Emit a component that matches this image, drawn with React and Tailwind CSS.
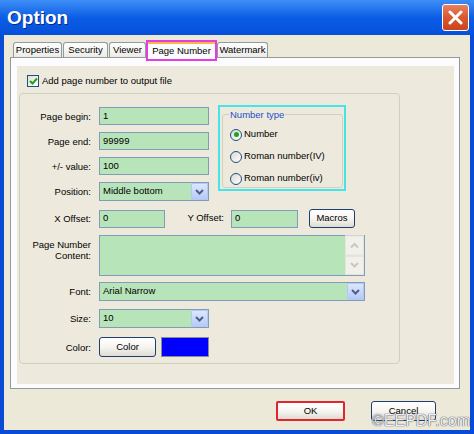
import React from "react";

function Chevron({ color = "#4D6185" }) {
  return (
    <svg width="9" height="6" viewBox="0 0 9 6">
      <path d="M1 1 L4.5 4.5 L8 1" stroke={color} strokeWidth="2" fill="none" />
    </svg>
  );
}

function ComboBtn() {
  return (
    <div className="w-[17px] h-full border border-[#B5C8F4] rounded-[2px] bg-linear-to-b from-[#DCE6FE] to-[#B6C9F8] flex items-center justify-center">
      <Chevron />
    </div>
  );
}

function Label({ children }) {
  return <div className="w-[71px] text-right leading-[11px]">{children}</div>;
}

function XPButton({ children, className = "" }) {
  return (
    <div
      className={
        "border border-[#1E3F6E] rounded-[3px] bg-linear-to-b from-white via-[#F6F5F1] to-[#DEDCD2] flex items-center justify-center " +
        className
      }
    >
      {children}
    </div>
  );
}

function Radio({ checked, label }) {
  return (
    <div className="flex items-center h-[13px]">
      <div className="w-[12px] h-[12px] rounded-full border border-[#1C5180] bg-linear-to-br from-[#DCD9CF] to-white flex items-center justify-center">
        {checked && <div className="w-[5px] h-[5px] rounded-full bg-[#21A121]" />}
      </div>
      <span className="ml-[2px]">{label}</span>
    </div>
  );
}

export default function App() {
  return (
    <div className="w-[474px] h-[434px] bg-[#0A4BD6] flex flex-col font-['Liberation_Sans',Arial,sans-serif] text-[9.5px] text-black overflow-hidden relative">
      {/* Title bar */}
      <div className="h-[35px] shrink-0 bg-linear-to-b from-[#3D8EF6] via-[#0B5DE6] to-[#0650DA] flex items-center justify-between pl-[7px] pr-[5px]">
        <span className="text-white font-bold text-[19px] leading-none [text-shadow:1px_1px_0_#0A2A8A]">
          Option
        </span>
        <div className="w-[27px] h-[27px] rounded-[3px] border border-white bg-linear-to-b from-[#E8805E] via-[#D9582F] to-[#C9441E] flex items-center justify-center">
          <svg width="15" height="15" viewBox="0 0 15 15">
            <path d="M2 2 L13 13 M13 2 L2 13" stroke="white" strokeWidth="3" strokeLinecap="round" />
          </svg>
        </div>
      </div>

      {/* Client area */}
      <div className="flex-1 mx-[4px] mb-[4px] bg-[#ECE9D8] flex flex-col pt-[5px]">
        {/* Tabs */}
        <div className="h-[17px] flex items-start ml-[6px] pl-[3px]">
          <div className="mt-[2px] h-[15px] w-[49px] border border-b-0 border-[#919B9C] rounded-t-[3px] bg-linear-to-b from-white to-[#ECEBE6] flex items-center justify-center">
            Properties
          </div>
          <div className="ml-[1px] mt-[2px] h-[15px] w-[45px] border border-b-0 border-[#919B9C] rounded-t-[3px] bg-linear-to-b from-white to-[#ECEBE6] flex items-center justify-center">
            Security
          </div>
          <div className="ml-[1px] mt-[2px] h-[15px] w-[37px] border border-b-0 border-[#919B9C] rounded-t-[3px] bg-linear-to-b from-white to-[#ECEBE6] flex items-center justify-center">
            Viewer
          </div>
          <div className="relative z-10 h-[21px] w-[71px] border-2 border-[#E33DE3] bg-[#FCFCFE] flex flex-col">
            <div className="h-[2px] bg-[#F7B94A]" />
            <div className="text-center leading-[11px] mt-[1px]">Page Number</div>
          </div>
          <div className="mt-[2px] h-[15px] w-[51px] border border-b-0 border-[#919B9C] rounded-t-[3px] bg-linear-to-b from-white to-[#ECEBE6] flex items-center justify-center">
            Watermark
          </div>
        </div>

        {/* Tab panel */}
        <div className="ml-[6px] w-[450px] h-[332px] border border-[#919B9C] bg-[#FCFCFE] pt-[8px] pl-[6px] pr-[5px] pb-[4px]">
          <div className="h-full bg-[#EDEADD] flex flex-col pl-[2px]">
            {/* Checkbox row */}
            <div className="flex items-center mt-[9px] ml-[8px] h-[12px]">
              <div className="w-[12px] h-[12px] border border-[#1C5180] bg-linear-to-br from-[#E0DED5] to-white flex items-center justify-center">
                <svg width="9" height="8" viewBox="0 0 9 8">
                  <path d="M1 4 L3.5 6.5 L8 1.5" stroke="#21A121" strokeWidth="2" fill="none" />
                </svg>
              </div>
              <span className="ml-[3px]">Add page number to output file</span>
            </div>

            {/* Group box */}
            <div className="mt-[6px] w-[381px] h-[271px] border border-[#D0D0BF] rounded-[4px] flex flex-col pt-[11px]">
              {/* Top section */}
              <div className="flex items-start">
                <div className="flex flex-col gap-[7px] mt-[2px]">
                  <div className="flex items-center">
                    <Label>Page begin:</Label>
                    <div className="ml-[8px] w-[110px] h-[18px] border border-[#7F9DB9] bg-[#B8E4BA] pl-[3px] flex items-center">1</div>
                  </div>
                  <div className="flex items-center">
                    <Label>Page end:</Label>
                    <div className="ml-[8px] w-[110px] h-[18px] border border-[#7F9DB9] bg-[#B8E4BA] pl-[3px] flex items-center">99999</div>
                  </div>
                  <div className="flex items-center">
                    <Label>+/- value:</Label>
                    <div className="ml-[8px] w-[110px] h-[18px] border border-[#7F9DB9] bg-[#B8E4BA] pl-[3px] flex items-center">100</div>
                  </div>
                  <div className="flex items-center">
                    <Label>Position:</Label>
                    <div className="ml-[8px] w-[110px] h-[19px] border border-[#7F9DB9] bg-[#B8E4BA] flex items-center">
                      <span className="flex-1 pl-[3px]">Middle bottom</span>
                      <ComboBtn />
                    </div>
                  </div>
                </div>

                {/* Number type */}
                <div className="ml-[9px] w-[128px] h-[86px] border-2 border-[#45E3EA] flex flex-col">
                  <fieldset className="mt-[2px] ml-[2px] w-[121px] h-[79px] border border-[#D0D0BF] rounded-[3px] pl-[7px]">
                    <legend className="ml-[-1px] px-[1px] text-[#1E4FC8] leading-[11px]">Number type</legend>
                    <div className="flex flex-col gap-[9px] mt-[8px]">
                      <Radio checked label="Number" />
                      <Radio label="Roman number(IV)" />
                      <Radio label="Roman number(iv)" />
                    </div>
                  </fieldset>
                </div>
              </div>

              {/* Offsets */}
              <div className="flex items-center mt-[8px]">
                <Label>X Offset:</Label>
                <div className="ml-[8px] w-[66px] h-[18px] border border-[#7F9DB9] bg-[#B8E4BA] pl-[3px] flex items-center">0</div>
                <div className="w-[59px] text-right">Y Offset:</div>
                <div className="ml-[7px] w-[67px] h-[18px] border border-[#7F9DB9] bg-[#B8E4BA] pl-[3px] flex items-center">0</div>
                <XPButton className="ml-[11px] w-[46px] h-[19px]">Macros</XPButton>
              </div>

              {/* Content */}
              <div className="flex items-start mt-[7px]">
                <div className="pt-[4px]">
                  <Label>
                    Page Number
                    <br />
                    Content:
                  </Label>
                </div>
                <div className="ml-[8px] w-[266px] h-[41px] border border-[#7F9DB9] bg-[#B8E4BA] flex justify-end">
                  <div className="w-[19px] h-full flex flex-col">
                    <div className="flex-1 border border-[#E7E5DA] bg-[#F1F0EA] flex items-center justify-center rotate-180">
                      <Chevron color="#CBC8BA" />
                    </div>
                    <div className="flex-1 border border-[#E7E5DA] bg-[#F1F0EA] flex items-center justify-center">
                      <Chevron color="#CBC8BA" />
                    </div>
                  </div>
                </div>
              </div>

              {/* Font */}
              <div className="flex items-center mt-[6px]">
                <Label>Font:</Label>
                <div className="ml-[8px] w-[266px] h-[19px] border border-[#7F9DB9] bg-[#B8E4BA] flex items-center">
                  <span className="flex-1 pl-[3px]">Arial Narrow</span>
                  <ComboBtn />
                </div>
              </div>

              {/* Size */}
              <div className="flex items-center mt-[8px]">
                <Label>Size:</Label>
                <div className="ml-[8px] w-[110px] h-[19px] border border-[#7F9DB9] bg-[#B8E4BA] flex items-center">
                  <span className="flex-1 pl-[3px]">10</span>
                  <ComboBtn />
                </div>
              </div>

              {/* Color */}
              <div className="flex items-center mt-[9px]">
                <Label>Color:</Label>
                <XPButton className="ml-[8px] w-[57px] h-[20px]">Color</XPButton>
                <div className="ml-[5px] w-[48px] h-[20px] border border-[#8C8C94] bg-[#0000FF]" />
              </div>
            </div>
          </div>
        </div>

        {/* Bottom buttons */}
        <div className="flex justify-end mt-[12px] pr-[34px]">
          <div className="w-[69px] h-[20px] border-2 border-[#E0262C] rounded-[2px] bg-linear-to-b from-white via-[#F6F5F1] to-[#DEDCD2] flex items-center justify-center">
            OK
          </div>
          <XPButton className="ml-[26px] w-[65px] h-[20px]">Cancel</XPButton>
        </div>
      </div>

      {/* Watermark */}
      <div className="absolute left-[372px] top-[411px] text-[16px] leading-[19px] text-[#EEEEF4] [text-shadow:0_0_1px_#4A4A58,0_0_1px_#4A4A58]">
        ©EEPDF.com
      </div>
    </div>
  );
}
